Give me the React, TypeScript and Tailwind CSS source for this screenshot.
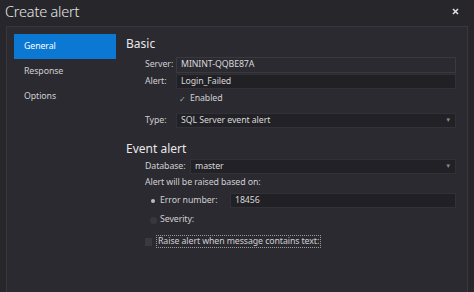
import React from "react";

const font = { fontFamily: '"Noto Sans", "Open Sans", sans-serif' };

export default function App() {
  return (
    <div
      className="w-[474px] h-[292px] bg-[#27262b] flex flex-col overflow-hidden text-[#cfcfd2]"
      style={font}
    >
      {/* title bar */}
      <div className="h-[26px] flex items-center justify-between pl-[5px] pr-[15px]">
        <span className="text-[14.5px] font-light text-[#e6e6e8] leading-none -mt-[4px] tracking-[-0.2px]">Create alert</span>
        <svg width="7" height="7" viewBox="0 0 7 7" className="-mt-[4px]">
          <path d="M1 1 L6 6 M6 1 L1 6" stroke="#e0e0e0" strokeWidth="1.6" />
        </svg>
      </div>

      {/* panel */}
      <div className="flex-1 mx-[6px] border-t border-l border-r border-[#38373e] bg-[#2b2a30] flex pt-[7px] pl-[7px]">
        {/* nav */}
        <div className="w-[102px] flex flex-col text-[8.8px] tracking-[-0.1px]">
          <div className="h-[25px] bg-[#0b78d4] text-white flex items-center pl-[10px]">General</div>
          <div className="h-[25px] flex items-center pl-[10px]">Response</div>
          <div className="h-[25px] flex items-center pl-[10px]">Options</div>
        </div>

        {/* content */}
        <div className="flex-1 ml-[10px] pr-[11px] flex flex-col text-[8.8px] tracking-[-0.1px]">
          <div className="h-[19px] flex items-center text-[12px] text-[#e8e8ea] leading-none tracking-normal">Basic</div>

          <div className="ml-[19px] mt-[4px] flex flex-col">
            <div className="h-[16px] flex items-center">
              <span className="w-[31px]">Server:</span>
              <div className="flex-1 h-[16px] border border-[#3a3940] flex items-center pl-[4px] text-[#d8d8da]">MININT-QQBE87A</div>
            </div>
            <div className="h-[15px] mt-[1px] flex items-center">
              <span className="w-[31px]">Alert:</span>
              <div className="flex-1 h-[15px] bg-[#212025] border border-[#323137] flex items-center pl-[4px] text-[#d8d8da]">Login_Failed</div>
            </div>
            <div className="h-[14px] mt-[3px] flex items-center pl-[34px]">
              <span className="text-[#a8a8ac] text-[8px] mr-[4px]">✓</span>
              <span>Enabled</span>
            </div>
            <div className="h-[15px] mt-[7px] flex items-center">
              <span className="w-[31px]">Type:</span>
              <div className="flex-1 h-[15px] bg-[#222126] border border-[#323137] flex items-center pl-[4px] pr-[4px] text-[#d8d8da]">
                <span className="flex-1">SQL Server event alert</span>
                <span className="text-[6px] text-[#8a8a8e]">▼</span>
              </div>
            </div>
          </div>

          <div className="h-[19px] mt-[11px] flex items-center text-[12px] text-[#e8e8ea] leading-none tracking-normal">Event alert</div>

          <div className="ml-[19px] mt-[1px] flex flex-col">
            <div className="h-[15px] flex items-center">
              <span className="w-[45px]">Database:</span>
              <div className="flex-1 h-[15px] bg-[#222126] border border-[#323137] flex items-center pl-[4px] pr-[4px] text-[#d8d8da]">
                <span className="flex-1">master</span>
                <span className="text-[6px] text-[#8a8a8e]">▼</span>
              </div>
            </div>
            <div className="h-[14px] mt-[2px] flex items-center">Alert will be raised based on:</div>
            <div className="h-[15px] mt-[3px] flex items-center">
              <span className="w-[15px] flex justify-center pl-[1px]">
                <span className="w-[4px] h-[4px] rounded-full bg-[#bdbdc0]" />
              </span>
              <span className="w-[70px]">Error number:</span>
              <div className="flex-1 h-[15px] bg-[#212025] border border-[#323137] flex items-center pl-[4px] text-[#d8d8da]">18456</div>
            </div>
            <div className="h-[14px] mt-[5px] flex items-center">
              <span className="w-[15px] flex justify-center pl-[1px]">
                <span className="w-[7px] h-[7px] rounded-full bg-[#38373d]" />
              </span>
              <span>Severity:</span>
            </div>
            <div className="h-[13px] mt-[8px] flex items-center">
              <span className="w-[7px] h-[8px] bg-[#3a3940] mr-[4px]" />
              <span className="border border-dotted border-[#9a9a9e] px-[1px] leading-[11px]">
                Raise alert when message contains text:
              </span>
            </div>
          </div>
        </div>
      </div>
    </div>
  );
}
